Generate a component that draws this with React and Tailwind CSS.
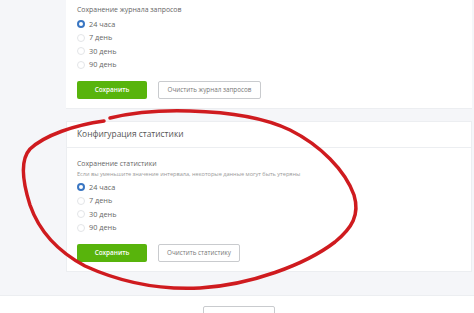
import { useState } from 'react';

const periods = ['24 часа', '7 день', '30 день', '90 день'];

function RadioList({ value, onChange }) {
    return (
        <div>
            {periods.map((p) => (
                <label key={p} className="flex h-[13.5px] cursor-pointer items-center gap-[4px]" onClick={() => onChange(p)}>
                    {value === p ? (
                        <span className="h-[8px] w-[8px] rounded-full border-[2.5px] border-[#3a76c2] bg-white" />
                    ) : (
                        <span className="h-[8px] w-[8px] rounded-full border border-[#e3e5e8] bg-white" />
                    )}
                    <span className="text-[7.3px] leading-none text-[#666]">{p}</span>
                </label>
            ))}
        </div>
    );
}

function Buttons({ clearLabel, clearWidth }) {
    return (
        <div className="flex gap-[11px]">
            <button className="h-[18px] w-[70px] rounded-[2px] bg-[#58b40c] text-[6.4px] font-semibold text-white">
                Сохранить
            </button>
            <button className={`h-[18px] ${clearWidth} rounded-[2px] border border-[#c9cbce] bg-white text-[6.3px] text-[#777]`}>
                {clearLabel}
            </button>
        </div>
    );
}

export default function App() {
    const [logPeriod, setLogPeriod] = useState('24 часа');
    const [statPeriod, setStatPeriod] = useState('24 часа');

    return (
        <div className="relative h-[313px] w-[474px] overflow-hidden bg-[#f5f6f9] font-['Open_Sans',sans-serif]">
            <div className="pl-[66px] pr-[2px]">
                {/* Query log card (top cut off) */}
                <div className="border-b border-[#eceef1] bg-white pb-[9px] pl-[11px] pt-[4px]">
                    <div className="h-[12px] text-[6.9px] leading-[12px] text-[#666]">Сохранение журнала запросов</div>
                    <div className="pt-[1.5px]">
                        <RadioList value={logPeriod} onChange={setLogPeriod} />
                    </div>
                    <div className="mt-[9.5px]">
                        <Buttons clearLabel="Очистить журнал запросов" clearWidth="w-[103px]" />
                    </div>
                </div>

                {/* Statistics card */}
                <div className="mt-[12px] border border-[#eceef1] bg-white">
                    <div className="flex h-[26px] items-center border-b border-[#eceef1] px-[10px] text-[8.4px] text-[#555]">
                        Конфигурация статистики
                    </div>
                    <div className="px-[10px] pb-[9px] pt-[10px]">
                        <div className="h-[12px] text-[6.9px] leading-[12px] text-[#666]">Сохранение статистики</div>
                        <div className="h-[8px] text-[5.6px] leading-[8px] text-[#999]">
                            Если вы уменьшите значение интервала, некоторые данные могут быть утеряны
                        </div>
                        <div className="pt-[2.5px]">
                            <RadioList value={statPeriod} onChange={setStatPeriod} />
                        </div>
                        <div className="mt-[9.5px]">
                            <Buttons clearLabel="Очистить статистику" clearWidth="w-[82px]" />
                        </div>
                    </div>
                </div>
            </div>

            {/* Next section, cut off at bottom */}
            <div className="mt-[23px] h-[30px] border-t border-[#eceef1] bg-white pl-[203px] pt-[10px]">
                <div className="h-[18px] w-[72px] rounded-[2px] border border-[#c9cbce]" />
            </div>

            {/* Hand-drawn red circle */}
            <svg className="pointer-events-none absolute left-0 top-0" width="474" height="313" viewBox="0 0 474 313">
                <path
                    d="M110,118 C135,112 160,110 190,111 C230,112 265,118 290,130 C320,145 345,170 354,195 C360,215 352,228 335,242 C305,265 250,285 200,288 C160,290 120,282 85,266 C55,250 38,228 30,205 C22,180 20,160 30,149 C45,135 75,125 104,121"
                    fill="none"
                    stroke="#cf1b1f"
                    strokeWidth="3.5"
                    strokeLinecap="round"
                />
            </svg>
        </div>
    );
}
